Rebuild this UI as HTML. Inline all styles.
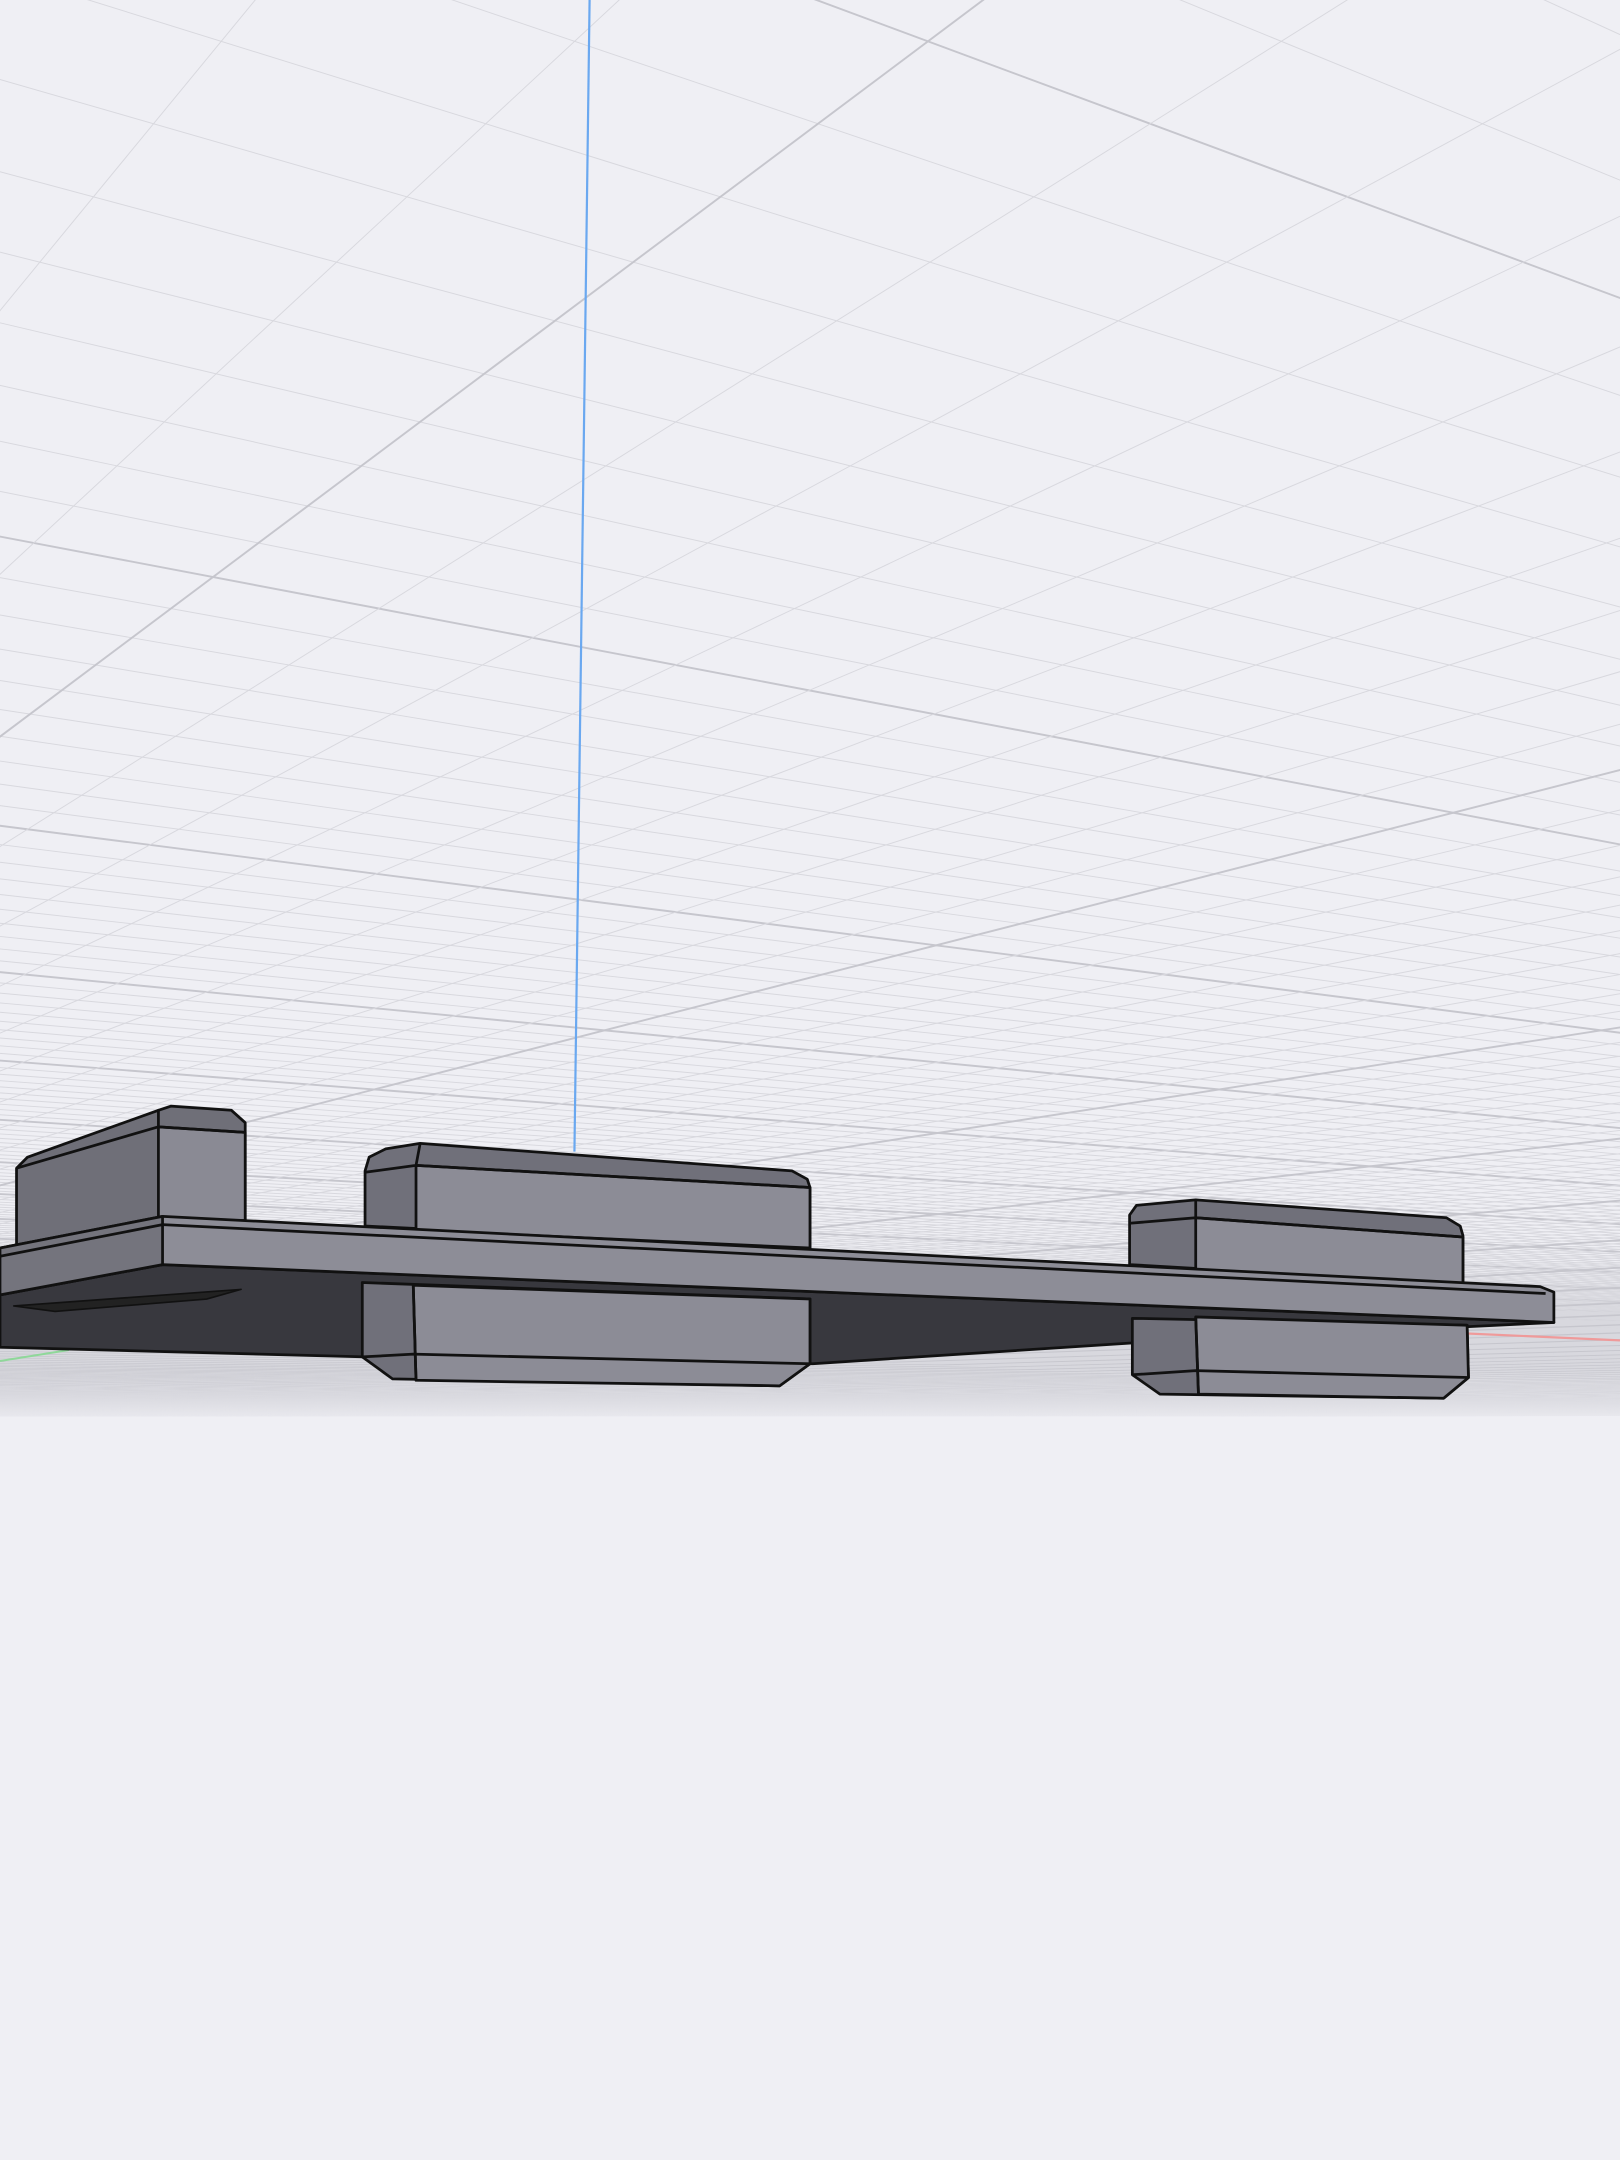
<!DOCTYPE html>
<html><head><meta charset="utf-8"><style>
html,body{margin:0;padding:0;background:#efeff4;width:1620px;height:2160px;overflow:hidden}
svg{display:block}
</style></head><body>
<svg id="s" width="1620" height="2160" viewBox="0 0 1176 1568" xmlns="http://www.w3.org/2000/svg">
<defs>
<clipPath id="c"><rect x="0" y="0" width="1176" height="1028"/></clipPath>
<linearGradient id="fade" x1="0" y1="0" x2="0" y2="1">
<stop offset="0" stop-color="#efeff4" stop-opacity="0"/>
<stop offset="1" stop-color="#efeff4" stop-opacity="1"/>
</linearGradient>
</defs>
<rect width="1176" height="1568" fill="#efeff4"/>
<g id="grid" clip-path="url(#c)" fill="none"></g>
<rect x="0" y="995" width="1176" height="40" fill="url(#fade)"/>
<g stroke="#111" stroke-width="2" stroke-linejoin="round">
<line x1="428" y1="0" x2="417" y2="836" stroke="#6aa8f0" stroke-width="1.6"/>
<line x1="1065" y1="968" x2="1176" y2="973" stroke="#ef9a9a" stroke-width="1.6"/>
<line x1="0" y1="988" x2="50" y2="980" stroke="#8fd89a" stroke-width="1.4"/>
<path d="M12,848 L20,840 L115,806 L124,803 L168,806 L178,815 L178,886 L115,886 L12,905 Z" fill="#6f6f78"/>
<path d="M115,806 L115,886 L178,886 L178,822 L115,818 Z" fill="#8a8a94"/>
<path d="M12,848 L115,818 L178,822" fill="none"/>
<path d="M265,850 L268,840 L280,834 L305,830 L575,850 L586,856 L588,862 L588,906 L265,890 Z" fill="#70707a"/>
<path d="M302,846 L302,893 L588,906 L588,862 Z" fill="#8c8c96"/>
<path d="M265,851 L302,846 L588,862 M305,830 L302,846" fill="none"/>
<path d="M820,882 L825,875 L868,871 L1050,884 L1060,890 L1062,897 L1062,932 L820,918 Z" fill="#70707a"/>
<path d="M868,884 L868,922 L1062,932 L1062,898 Z" fill="#8c8c96"/>
<path d="M820,888 L868,884 L1062,898 M868,871 L868,884" fill="none"/>
<path d="M0,940 L118,918 L1128,960 L820,975 L590,990 L265,985 L0,978 Z" fill="#38383e"/>
<path d="M10,948 L175,936 L150,943 L40,952 Z" fill="#222" stroke-width="1.2"/>
<path d="M0,906 L118,883 L1118,934 L1128,938 L1128,960 L118,918 L0,940 Z" fill="#8d8d97"/>
<path d="M0,906 L118,883 L118,918 L0,940 Z" fill="#74747d"/>
<path d="M0,912 L118,889 L1122,939" fill="none"/>
<path d="M263,931 L588,943 L588,990 L566,1006 L285,1001 L263,985 Z" fill="#70707a"/>
<path d="M300,933 L588,943 L588,990 L566,1006 L302,1002 Z" fill="#8c8c96"/>
<path d="M263,985 L300,983 L588,990 M300,933 L302,1002" fill="none"/>
<path d="M822,957 L1065,962 L1066,1000 L1048,1015 L842,1012 L822,998 Z" fill="#70707a"/>
<path d="M868,956 L1065,962 L1066,1000 L1048,1015 L870,1012 Z" fill="#8c8c96"/>
<path d="M822,998 L868,995 L1066,1000 M868,956 L870,1012" fill="none"/>
</g>
</svg>
<script>
(function(){
var g=document.getElementById('grid'),ns='http://www.w3.org/2000/svg';
var V1=[3370,1030],V2=[-661,1030],O=[400,975],a=0.0035,b=0.0035;
function P(u,v){var w=a*u+b*v+1;return [(a*u*V1[0]+b*v*V2[0]+O[0])/w,(a*u*V1[1]+b*v*V2[1]+O[1])/w,w];}
function line(A,B,major){
 var dx=B[0]-A[0],dy=B[1]-A[1],t=6000/Math.hypot(dx,dy);
 var l=document.createElementNS(ns,'line');
 l.setAttribute('x1',A[0]);l.setAttribute('y1',A[1]);
 l.setAttribute('x2',A[0]+dx*t);l.setAttribute('y2',A[1]+dy*t);
 l.setAttribute('stroke',major?'#c6c6cd':'#d8d8de');
 l.setAttribute('stroke-width',major?1.4:0.7);
 g.appendChild(l);
}
for(var i=-280;i<=2500;i++){
 var p=P(i,0); if(p[2]>0.02) line(V2,p,i%10==0);
 var q=P(0,i); if(q[2]>0.02) line(V1,q,i%10==0);
}
})();
</script>
</body></html>
